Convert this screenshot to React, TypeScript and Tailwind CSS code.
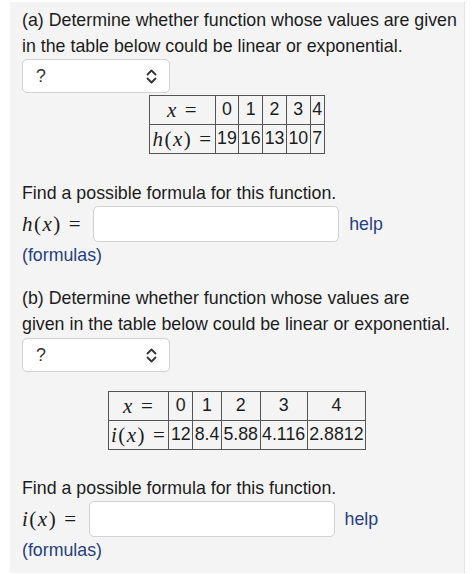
import React from 'react';

const sans = { fontFamily: '"Liberation Sans", Arial, sans-serif' };

function M({ children }: { children: React.ReactNode }) {
  return <i className="italic">{children}</i>;
}

function Eq({ name }: { name: string }) {
  return (
    <span className="font-['Liberation_Serif'] text-[21px] tracking-[1.5px] whitespace-nowrap">
      <M>{name}</M>(<M>x</M>)<span className="ml-[7px]">=</span>
    </span>
  );
}

function Select() {
  return (
    <div className="flex h-[34px] w-[148px] items-center justify-between rounded-[5px] border border-[#d2d2d2] bg-white pl-[13px] pr-[12px] text-[#333]">
      <span>?</span>
      <svg width="11" height="15" viewBox="0 0 11 15" fill="none" stroke="#333" strokeWidth="1.8" strokeLinecap="round" strokeLinejoin="round">
        <path d="M1.5 5.5 L5.5 1.5 L9.5 5.5" />
        <path d="M1.5 9.5 L5.5 13.5 L9.5 9.5" />
      </svg>
    </div>
  );
}

function ValueTable({ name, xs, ys }: { name: string; xs: string[]; ys: string[] }) {
  const cell = 'border border-[#555] px-[1.5px] h-[29px] text-center align-middle leading-none';
  return (
    <table className="mx-auto border-collapse border-[1.5px] border-[#555]">
      <tbody>
        <tr>
          <td className={cell}>
            <span className="font-['Liberation_Serif'] text-[21px] tracking-[1.5px]">
              <M>x</M>
              <span className="ml-[7px]">=</span>
            </span>
          </td>
          {xs.map((v, i) => (
            <td key={i} className={cell}>{v}</td>
          ))}
        </tr>
        <tr>
          <td className={cell + ' px-[2px]'}>
            <Eq name={name} />
          </td>
          {ys.map((v, i) => (
            <td key={i} className={cell}>{v}</td>
          ))}
        </tr>
      </tbody>
    </table>
  );
}

function FormulaRow({ name }: { name: string }) {
  return (
    <>
      <p>Find a possible formula for this function.</p>
      <div className="flex items-center">
        <Eq name={name} />
        <div className="ml-[11px] h-[36px] w-[246px] rounded-[5px] border border-[#d2d2d2] bg-white" />
        <a className="ml-[10px] text-[#263f80]">help</a>
      </div>
      <a className="block text-[#263f80]">(formulas)</a>
    </>
  );
}

export default function App() {
  return (
    <div className="min-h-[574px] bg-white pt-[2px]" style={sans}>
      <div className="ml-[10px] w-[455px] border-r border-[#e4e4e4] bg-[#f4f4f4] px-[12px] pt-[5px] pb-[10px] text-[17.8px] leading-[26px] text-[#1c1c1c]">
        {/* part (a) */}
        <p className="whitespace-nowrap">
          (a) Determine whether function whose values are given
          <br />
          in the table below could be linear or exponential.
        </p>
        <Select />
        <div className="mt-[2px]">
          <ValueTable name="h" xs={['0', '1', '2', '3', '4']} ys={['19', '16', '13', '10', '7']} />
        </div>
        <div className="mt-[26px]">
          <FormulaRow name="h" />
        </div>

        {/* part (b) */}
        <p className="mt-[17px] whitespace-nowrap">
          (b) Determine whether function whose values are
          <br />
          given in the table below could be linear or exponential.
        </p>
        <div className="mt-[1px]">
          <Select />
        </div>
        <div className="mt-[19px]">
          <ValueTable name="i" xs={['0', '1', '2', '3', '4']} ys={['12', '8.4', '5.88', '4.116', '2.8812']} />
        </div>
        <div className="mt-[25px]">
          <FormulaRow name="i" />
        </div>
      </div>
    </div>
  );
}
